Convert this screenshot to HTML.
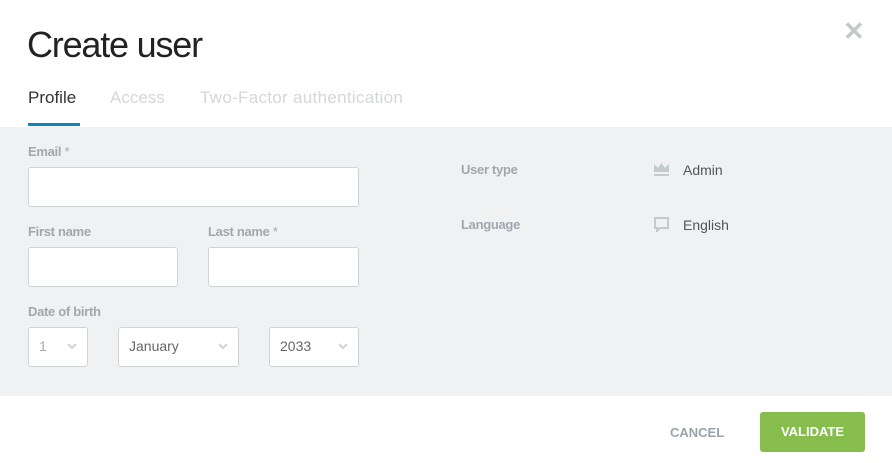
<!DOCTYPE html>
<html><head><style>
*{margin:0;padding:0;box-sizing:border-box}
body{width:892px;height:463px;background:#fff;font-family:"Liberation Sans",sans-serif;position:relative;overflow:hidden}
.a{position:absolute}
.lbl{font-size:13px;font-weight:bold;color:#a0a8ae;letter-spacing:-0.3px}
.in{background:#fff;border:1px solid #cfd3d6;border-radius:3px}
.sel{font-size:14px;color:#666;padding:10px 0 0 10px}
.chev{position:absolute;right:10px;top:14px}
</style></head><body>
<div class="a" style="left:27px;top:24px;font-size:36px;color:#222;letter-spacing:-1.2px">Create user</div>
<div class="a" style="left:843px;top:16px;font-size:26px;color:#c3c8cc;font-weight:bold">✕</div>
<div class="a" style="left:28px;top:88px;font-size:17px;color:#333">Profile</div>
<div class="a" style="left:110px;top:88px;font-size:17px;color:#d4d6d8">Access</div>
<div class="a" style="left:200px;top:88px;font-size:17px;color:#d4d6d8;letter-spacing:0.3px">Two-Factor authentication</div>
<div class="a" style="left:28px;top:123px;width:52px;height:3px;background:#0a84c6"></div>
<div class="a" style="left:0;top:127px;width:892px;height:269px;background:#f0f1f3"></div>
<div class="a lbl" style="left:28px;top:144px">Email <span style="font-weight:normal">*</span></div>
<div class="a in" style="left:28px;top:167px;width:331px;height:40px"></div>
<div class="a lbl" style="left:28px;top:224px">First name</div>
<div class="a lbl" style="left:208px;top:224px">Last name <span style="font-weight:normal">*</span></div>
<div class="a in" style="left:28px;top:247px;width:150px;height:40px"></div>
<div class="a in" style="left:208px;top:247px;width:151px;height:40px"></div>
<div class="a lbl" style="left:28px;top:304px">Date of birth</div>
<div class="a in sel" style="left:28px;top:327px;width:60px;height:40px;color:#aaa">1<svg class="chev" width="10" height="8"><path d="M1 2l4 4 4-4" stroke="#d0d4d7" stroke-width="2" fill="none"/></svg></div>
<div class="a in sel" style="left:118px;top:327px;width:121px;height:40px">January<svg class="chev" width="10" height="8"><path d="M1 2l4 4 4-4" stroke="#d0d4d7" stroke-width="2" fill="none"/></svg></div>
<div class="a in sel" style="left:269px;top:327px;width:90px;height:40px">2033<svg class="chev" width="10" height="8"><path d="M1 2l4 4 4-4" stroke="#d0d4d7" stroke-width="2" fill="none"/></svg></div>
<div class="a lbl" style="left:461px;top:162px">User type</div>
<div class="a lbl" style="left:461px;top:217px">Language</div>
<svg class="a" style="left:654px;top:162px" width="15" height="14"><path d="M0 2l4 4 3.5-5 3.5 5 4-4v8H0z" fill="#c3c9cd"/><rect x="0" y="12" width="15" height="2" fill="#c3c9cd"/></svg>
<svg class="a" style="left:654px;top:217px" width="15" height="15"><path d="M1 1h13v10H6l-3 3v-3H1z" stroke="#c3c9cd" stroke-width="2" fill="none"/></svg>
<div class="a" style="left:683px;top:162px;font-size:14px;color:#555">Admin</div>
<div class="a" style="left:683px;top:217px;font-size:14px;color:#555">English</div>
<div class="a" style="left:670px;top:425px;font-size:13px;font-weight:bold;color:#9aa3a9">CANCEL</div>
<div class="a" style="left:760px;top:412px;width:105px;height:40px;background:#86bd4c;border-radius:3px;color:#fff;font-size:13px;font-weight:bold;text-align:center;line-height:40px">VALIDATE</div>
</body></html>
